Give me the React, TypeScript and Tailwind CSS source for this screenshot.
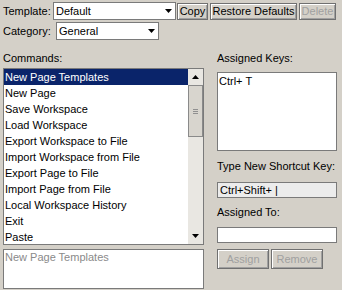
import React from 'react';

const commands = [
  'New Page Templates',
  'New Page',
  'Save Workspace',
  'Load Workspace',
  'Export Workspace to File',
  'Import Workspace from File',
  'Export Page to File',
  'Import Page from File',
  'Local Workspace History',
  'Exit',
  'Paste',
];

const Arrow: React.FC<{ up?: boolean }> = ({ up }) => (
  <svg width="7" height="4" viewBox="0 0 7 4" className="block">
    {up ? <polygon points="0,4 7,4 3.5,0" fill="#000" /> : <polygon points="0,0 7,0 3.5,4" fill="#000" />}
  </svg>
);

const Combo: React.FC<{ value: string; width: string }> = ({ value, width }) => (
  <div className={`flex items-center h-[18px] bg-white border border-[#7a7a7a] ${width}`}>
    <span className="flex-1 pl-[2px] leading-[16px]">{value}</span>
    <span className="w-[14px] flex items-center justify-center">
      <Arrow />
    </span>
  </div>
);

const Btn: React.FC<{ label: string; disabled?: boolean; className?: string }> = ({ label, disabled, className }) => (
  <div
    className={`flex items-center justify-center border border-[#707070] bg-[#D4D0C8] shadow-[inset_1px_1px_0_#fff,inset_-1px_-1px_0_#a0a0a0] ${
      disabled ? 'text-[#a0a0a0]' : 'text-black'
    } ${className ?? ''}`}
  >
    {label}
  </div>
);

export default function App() {
  return (
    <div
      className="w-[342px] h-[290px] bg-[#D4D0C8] text-black text-[11px] leading-[13px] overflow-hidden"
      style={{ fontFamily: '"Liberation Sans", Arial, sans-serif' }}
    >
      {/* top rows */}
      <div className="flex items-center pt-[2px] pl-[3px]">
        <span className="w-[50px]">Template:</span>
        <Combo value="Default" width="w-[123px]" />
        <Btn label="Copy" className="ml-[1px] w-[31px] h-[17px]" />
        <Btn label="Restore Defaults" className="ml-[2px] w-[87px] h-[17px]" />
        <Btn label="Delete" disabled className="ml-[2px] w-[37px] h-[17px]" />
      </div>
      <div className="flex items-center pt-[2px] pl-[3px]">
        <span className="w-[53px]">Category:</span>
        <Combo value="General" width="w-[103px]" />
      </div>

      <div className="flex mt-[12px]">
        {/* left column */}
        <div className="ml-[3px] w-[201px] flex flex-col">
          <div className="h-[14px]">Commands:</div>
          <div className="mt-[2px] h-[177px] flex border border-[#7a7a7a] bg-white">
            <div className="flex-1 flex flex-col">
              {commands.map((c, i) => (
                <div
                  key={c}
                  className={`h-[16px] leading-[16px] pl-[1px] ${i === 0 ? 'bg-[#0A246A] text-white' : ''}`}
                >
                  {c}
                </div>
              ))}
            </div>
            <div className="w-[15px] flex flex-col bg-[#E9E7E2]">
              <div className="h-[16px] flex items-center justify-center">
                <Arrow up />
              </div>
              <div className="h-[52px] border border-[#8a8a8a] bg-[#D8D5CE] flex items-center justify-center">
                <div className="flex flex-col gap-[1px]">
                  <div className="w-[5px] h-px bg-[#909090]" />
                  <div className="w-[5px] h-px bg-[#909090]" />
                  <div className="w-[5px] h-px bg-[#909090]" />
                </div>
              </div>
              <div className="flex-1" />
              <div className="h-[16px] flex items-center justify-center">
                <Arrow />
              </div>
            </div>
          </div>
          <div className="mt-[4px] h-[40px] border border-[#7a7a7a] bg-white text-[#8a8a8a] pl-[1px] pt-[1px]">
            New Page Templates
          </div>
        </div>

        {/* right column */}
        <div className="ml-[13px] w-[120px] flex flex-col">
          <div className="h-[14px]">Assigned Keys:</div>
          <div className="mt-[6px] h-[79px] border border-[#7a7a7a] bg-white pl-[1px] pt-[2px]">Ctrl+ T</div>
          <div className="mt-[9px] h-[14px]">Type New Shortcut Key:</div>
          <div className="mt-[8px] h-[16px] border border-[#7a7a7a] bg-[#ECECEC] leading-[14px] pl-[2px]">
            Ctrl+Shift+ |
          </div>
          <div className="mt-[8px] h-[14px]">Assigned To:</div>
          <div className="mt-[7px] h-[16px] border border-[#7a7a7a] bg-white" />
          <div className="flex mt-[6px]">
            <Btn label="Assign" disabled className="w-[52px] h-[20px]" />
            <Btn label="Remove" disabled className="ml-[2px] w-[52px] h-[20px]" />
          </div>
        </div>
      </div>
    </div>
  );
}
